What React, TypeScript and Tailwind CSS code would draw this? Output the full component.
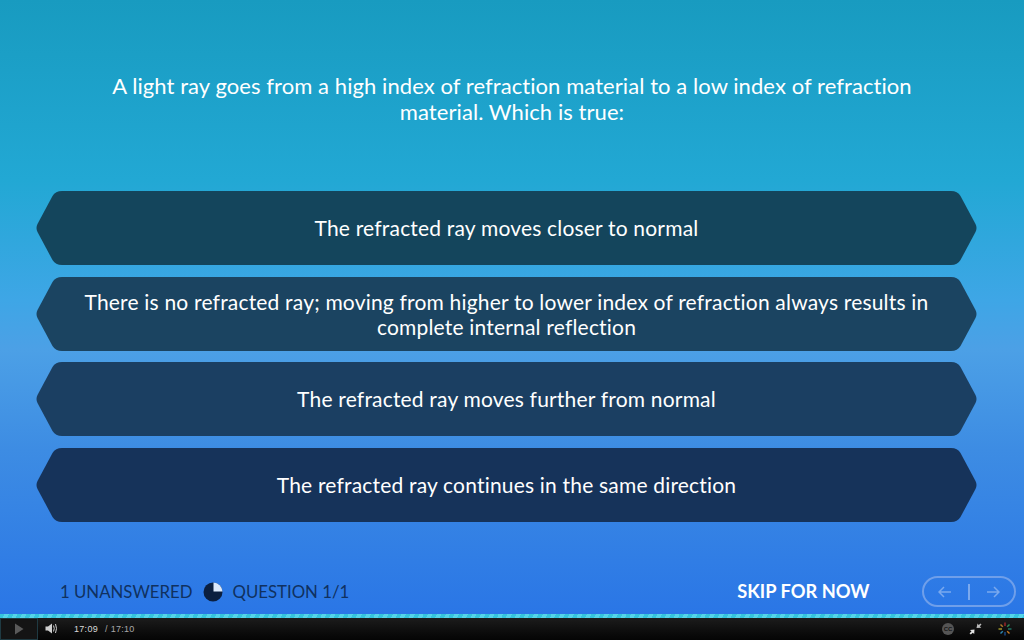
const OPTIONS = [
  { text: <>The refracted ray moves closer to normal</>, fill: '#14455c', pad: 'pb-[2px]' },
  {
    text: (
      <>
        There is no refracted ray; moving from higher to lower index of refraction always results in
        <br />
        complete internal reflection
      </>
    ),
    fill: '#1b4461',
    pad: '',
  },
  { text: <>The refracted ray moves further from normal</>, fill: '#1b3f62', pad: 'pb-[2px]' },
  { text: <>The refracted ray continues in the same direction</>, fill: '#16335a', pad: '' },
]

function OptionShape({ fill }: { fill: string }) {
  return (
    <svg className="absolute inset-0" width="941" height="74" viewBox="0 0 941 74">
      <path
        fill={fill}
        d="M26 0 H915 Q921.5 0 924.5 5 L939.5 33 Q941.5 37 939.5 41 L924.5 69 Q921.5 74 915 74 H26 Q19.5 74 16.5 69 L1.5 41 Q-0.5 37 1.5 33 L16.5 5 Q19.5 0 26 0 Z"
      />
    </svg>
  )
}

export default function App() {
  return (
    <div className="flex h-[640px] w-[1024px] flex-col overflow-hidden bg-[linear-gradient(180deg,#189bc0_0px,#22a8d4_180px,#3ea6e6_300px,#4ca0e6_350px,#3d8ce3_450px,#2a76e6_614px)] font-['Lato',sans-serif] [font-variant-ligatures:none]">
      <div className="h-[73px] shrink-0" />
      <h1 className="h-[118px] shrink-0 text-center text-[22px] leading-[26px] font-normal tracking-[0.07px] text-white">
        A light ray goes from a high index of refraction material to a low index of refraction
        <br />
        material. Which is true:
      </h1>

      <div className="ml-[36px] flex w-[941px] flex-col gap-[11.67px]">
        {OPTIONS.map((o, i) => (
          <div key={i} className={`relative flex h-[74px] items-center justify-center text-center text-[21px] leading-[25px] tracking-[0.19px] text-white ${o.pad}`}>
            <OptionShape fill={o.fill} />
            <span className="relative">{o.text}</span>
          </div>
        ))}
      </div>

      <div className="mt-[53px] flex h-[34px] shrink-0 items-center pl-[60px] pr-[8px] text-[16.8px] text-[#10315f]">
        <span>1 UNANSWERED</span>
        <svg className="ml-[11px]" width="20" height="20" viewBox="0 0 20 20">
          <circle cx="10" cy="10" r="9.5" fill="#0b1f3f" />
          <path d="M10.5 0.5 A9.5 9.5 0 0 1 19.5 9.5 H10.5 Z" fill="#dbe9fb" />
        </svg>
        <span className="ml-[9px]">QUESTION 1/1</span>
        <span className="ml-[388px] text-[18.3px] font-bold text-white">SKIP FOR NOW</span>
        <div className="ml-auto flex h-[31px] w-[94px] items-center justify-center rounded-full border-2 border-[#6f9fea] text-[#7aa9ee]">
          <svg width="14" height="12" viewBox="0 0 14 12" fill="none" stroke="currentColor" strokeWidth="1.5">
            <path d="M13 6H1M6 1 1 6l5 5" />
          </svg>
          <span className="mx-[16px] h-[16px] w-[2px] bg-[#7aa9ee]" />
          <svg width="14" height="12" viewBox="0 0 14 12" fill="none" stroke="currentColor" strokeWidth="1.5">
            <path d="M1 6h12M8 1l5 5-5 5" />
          </svg>
        </div>
      </div>

      <div className="mt-[5px] h-[4px] shrink-0 bg-[repeating-linear-gradient(115deg,#35c4dc_0px,#35c4dc_4px,#55d4e8_4px,#55d4e8_8px)]" />

      <div className="flex h-[22px] shrink-0 items-center bg-gradient-to-b from-[#1c1c1c] to-[#050505] font-['Liberation_Sans',sans-serif] text-[9px] text-[#c8c8c8]">
        <div className="flex h-[22px] w-[38px] items-center justify-center border border-[#1f3a42] bg-[#141414]">
          <svg width="10" height="12" viewBox="0 0 10 12">
            <path d="M1 0.5 9.5 6 1 11.5Z" fill="#5a5a5a" />
          </svg>
        </div>
        <svg className="ml-[7px]" width="13" height="13" viewBox="0 0 13 13">
          <path d="M0.5 4.5H3L7 1.5V11.5L3 8.5H0.5Z" fill="#d0d0d0" />
          <path d="M8.5 3.5Q10 6.5 8.5 9.5M10.5 2Q12.5 6.5 10.5 11" fill="none" stroke="#d0d0d0" strokeWidth="1" />
        </svg>
        <span className="ml-[16px] pt-[2px] tracking-[0.3px] text-[#d8d8d8]">17:09</span>
        <span className="ml-[7px] pt-[2px] tracking-[0.3px] text-[#a8a8a8]">/ 17:10</span>

        <div className="ml-auto flex items-center pr-[12px]">
          <span className="flex h-[12px] w-[12px] items-center justify-center rounded-full bg-[#555] text-[6px] leading-none font-bold text-[#151515]">CC</span>
          <svg className="ml-[15px]" width="13" height="12" viewBox="0 0 13 12">
            <path d="M8.5 0.5 9.7 2 11.5 0.5 12.5 1.5 10.8 3.2 12.3 4.7 7.5 5Z" fill="#bbb" />
            <path d="M5.5 6.5 5.2 11 3.8 9.7 1.8 11.5 0.5 10.2 2.5 8.4 1 7Z" fill="#e4e4e4" />
          </svg>
          <svg className="ml-[16px]" width="14" height="14" viewBox="0 0 14 14" strokeWidth="1.4">
            <path d="M7 0.5V4" stroke="#a3262c" />
            <path d="M7 10V13.5" stroke="#1c4d8c" />
            <path d="M0.5 7H4" stroke="#a8a02a" />
            <path d="M10 7H13.5" stroke="#1f7a6a" />
            <path d="M2.5 2.5 4.8 4.8" stroke="#b0782a" />
            <path d="M11.5 2.5 9.2 4.8" stroke="#2e8a55" />
            <path d="M2.5 11.5 4.8 9.2" stroke="#2d86b0" />
            <path d="M11.5 11.5 9.2 9.2" stroke="#c77a22" />
          </svg>
        </div>
      </div>
    </div>
  )
}
